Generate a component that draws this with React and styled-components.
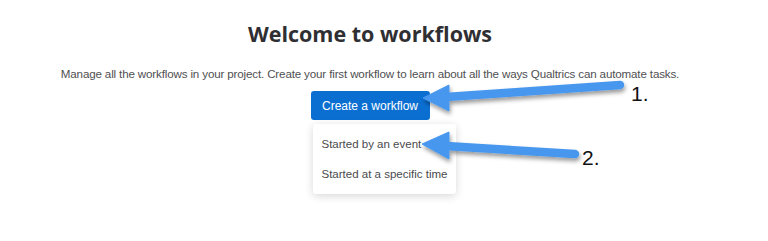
import styled, { createGlobalStyle } from 'styled-components';

const GlobalStyle = createGlobalStyle`
  html, body {
    margin: 0;
    padding: 0;
    background: #ffffff;
  }
  body {
    font-family: 'Open Sans', 'Liberation Sans', sans-serif;
  }
`;

const menuItems = [
  { id: 1, label: 'Started by an event' },
  { id: 2, label: 'Started at a specific time' },
];

const App = () => {
  return (
    <Screen>
      <GlobalStyle />
      <Page>
        <Title>Welcome to workflows</Title>
        <Lead>
          Manage all the workflows in your project. Create your first workflow to learn about all the
          ways Qualtrics can automate tasks.
        </Lead>
        <ButtonAnchor>
          <PrimaryButton>Create a workflow</PrimaryButton>
          <Menu>
            {menuItems.map(item => (
              <MenuItem key={item.id}>{item.label}</MenuItem>
            ))}
          </Menu>
        </ButtonAnchor>
      </Page>

      <Callouts width="768" height="241" viewBox="0 0 768 241">
        <defs>
          <filter id="arrowShadow" x="-10%" y="-50%" width="120%" height="200%">
            <feDropShadow dx="1" dy="3" stdDeviation="2.2" floodColor="#000" floodOpacity="0.4" />
          </filter>
        </defs>
        <g filter="url(#arrowShadow)" fill="#4797ef" stroke="#4797ef">
          <line x1="620" y1="85" x2="446" y2="97" strokeWidth="8.5" strokeLinecap="round" />
          <polygon points="423,98 449,85 449,111" strokeWidth="1" strokeLinejoin="round" />
          <line x1="575" y1="154" x2="446" y2="146" strokeWidth="8.5" strokeLinecap="round" />
          <polygon points="422,144 449,132 449,159" strokeWidth="1" strokeLinejoin="round" />
        </g>
      </Callouts>
      <StepLabel style={{ left: 631, top: 82 }}>1.</StepLabel>
      <StepLabel style={{ left: 582, top: 146 }}>2.</StepLabel>
    </Screen>
  );
};

export default App;

const Screen = styled.div`
  position: relative;
  width: 768px;
  height: 241px;
  overflow: hidden;
  background: #ffffff;
`;

const Page = styled.main`
  width: 740px;
  display: flex;
  flex-direction: column;
  align-items: center;
  padding-top: 19px;
`;

const Title = styled.h1`
  margin: 0;
  font-family: 'Open Sans', sans-serif;
  font-size: 21.5px;
  line-height: 29px;
  font-weight: 700;
  color: #2f2f33;
`;

const Lead = styled.p`
  margin: 18px 0 0;
  font-family: 'Liberation Sans', Arial, sans-serif;
  font-size: 11.6px;
  letter-spacing: -0.15px;
  line-height: 16px;
  color: #4f4f52;
  white-space: nowrap;
`;

const ButtonAnchor = styled.div`
  position: relative;
  margin-top: 9px;
`;

const PrimaryButton = styled.button`
  display: block;
  width: 119px;
  height: 29px;
  border: none;
  border-radius: 3px;
  background: #0b6fd2;
  color: #ffffff;
  font-family: 'Liberation Sans', Arial, sans-serif;
  font-size: 12px;
  padding: 0;
  cursor: pointer;
`;

const Menu = styled.ul`
  position: absolute;
  top: 33px;
  left: 2px;
  width: 143px;
  height: 70px;
  box-sizing: border-box;
  margin: 0;
  padding: 5px 0;
  list-style: none;
  background: #ffffff;
  border-radius: 3px;
  box-shadow: 0 2px 8px rgba(0, 0, 0, 0.16);
  display: flex;
  flex-direction: column;
`;

const MenuItem = styled.li`
  height: 30px;
  display: flex;
  align-items: center;
  padding-left: 9px;
  font-family: 'Liberation Sans', Arial, sans-serif;
  font-size: 11.5px;
  color: #4a4a4e;
  white-space: nowrap;
`;

const Callouts = styled.svg`
  position: absolute;
  top: 0;
  left: 0;
  pointer-events: none;
`;

const StepLabel = styled.span`
  position: absolute;
  font-family: 'Liberation Sans', Arial, sans-serif;
  font-size: 21px;
  line-height: 24px;
  color: #111111;
`;
